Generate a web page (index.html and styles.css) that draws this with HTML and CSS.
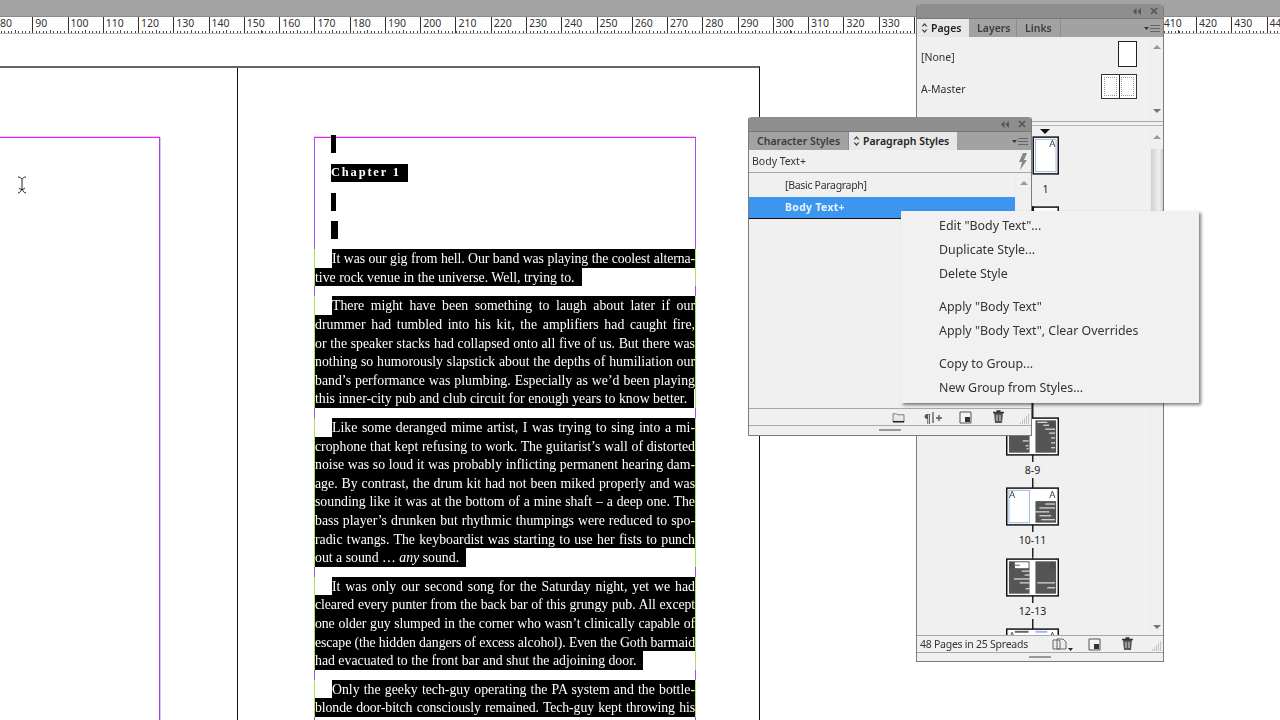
FILE: index.html
```html
<!DOCTYPE html>
<html lang="en">
<head>
    <meta charset="UTF-8">
    <title>Paragraph Styles</title>
    <link rel="stylesheet" href="styles.css">
</head>
<body>
    <svg class="defs" width="0" height="0">
        <symbol id="i-collapse" viewBox="0 0 10 8"><path d="M5 0 1 4l4 4zM10 0 6 4l4 4z" fill="#555"/></symbol>
        <symbol id="i-close" viewBox="0 0 8 8"><path d="M1 1l6 6M7 1 1 7" stroke="#555" stroke-width="1.600"/></symbol>
        <symbol id="i-menu" viewBox="0 0 16 8"><path d="M0 2h5L2.500 5z" fill="#333"/><path d="M6 .5h10M6 3.500h10M6 6.500h10" stroke="#666"/></symbol>
        <symbol id="i-folder" viewBox="0 0 14 12"><path d="M1 2h4l1 1h7v8H1z" fill="#e8e8e8" stroke="#777"/><path d="M1 10.500h12" stroke="#222" stroke-width="1.500"/></symbol>
        <symbol id="i-page" viewBox="0 0 13 13"><path d="M1 1h11v11H1z" fill="#f4f4f4" stroke="#555"/><path d="M6 6h5v5H6z" fill="#333"/></symbol>
        <symbol id="i-trash" viewBox="0 0 13 14"><path d="M2 3h9l-1 10H3z" fill="#555"/><path d="M1 2.500h11M4.500 1h4" stroke="#333" stroke-width="1.500"/><path d="M5 5v6M8 5v6" stroke="#ddd"/></symbol>
        <symbol id="i-grip" viewBox="0 0 10 10"><path d="M8 1h1M6 3h1M8 3h1M4 5h1M6 5h1M8 5h1M2 7h1M4 7h1M6 7h1M8 7h1M0 9h1M2 9h1M4 9h1M6 9h1M8 9h1" stroke="#999"/></symbol>
        <symbol id="i-bolt" viewBox="0 0 10 17"><path d="M5 0 1 9h3l-2 8 7-10H6l3-7z" fill="#888"/></symbol>
        <symbol id="i-sort" viewBox="0 0 7 10"><path d="M3.500 0 6.500 3.500h-1.500L3.500 2 2 3.500H.5zM3.500 10 .5 6.500H2L3.500 8 5 6.500h1.500z" fill="#444"/></symbol>
        <symbol id="i-up" viewBox="0 0 8 4"><path d="M4 0l4 4H0z" fill="#999"/></symbol>
        <symbol id="i-down" viewBox="0 0 8 4"><path d="M0 0h8L4 4z" fill="#777"/></symbol>
    </svg>

    <div class="top-bar"></div>

    <!-- Ruler -->
    <div class="ruler">
        <span>80</span><span>90</span><span>100</span><span>110</span><span>120</span><span>130</span><span>140</span><span>150</span><span>160</span><span>170</span><span>180</span><span>190</span><span>200</span><span>210</span><span>220</span><span>230</span><span>240</span><span>250</span><span>260</span><span>270</span><span>280</span><span>290</span><span>300</span><span>310</span><span>320</span><span>330</span><span>340</span><span>350</span><span>360</span><span>370</span><span>380</span><span>390</span><span>400</span><span>410</span><span>420</span><span>430</span><span>440</span>
    </div>

    <!-- Document canvas -->
    <div class="canvas">
        <div class="sheet"></div>
        <div class="left-frame"></div>

        <svg class="cursor" width="12" height="18" viewBox="0 0 12 18">
            <path d="M2 1c2 0 3 1 4 2 1-1 2-2 4-2M6 3v10M2 17c2 0 3-2 4-4 1 2 2 4 4 4M3 12l3 2 3-2" fill="none" stroke="#222"/>
        </svg>

        <div class="text-frame">
            <div class="caret top"></div>
            <div class="chapter">Chapter 1</div>
            <div class="caret"></div>
            <div class="caret wide"></div>

            <div class="para">
                <div class="ln first tight">It was our gig from hell. Our band was playing the coolest alterna-</div>
                <div class="ln last">tive rock venue in the universe. Well, trying to.</div>
            </div>
            <div class="para">
                <div class="ln first">There might have been something to laugh about later if our</div>
                <div class="ln">drummer had tumbled into his kit, the amplifiers had caught fire,</div>
                <div class="ln">or the speaker stacks had collapsed onto all five of us. But there was</div>
                <div class="ln">nothing so humorously slapstick about the depths of humiliation our</div>
                <div class="ln">band’s performance was plumbing. Especially as we’d been playing</div>
                <div class="ln last">this inner-city pub and club circuit for enough years to know better.</div>
            </div>
            <div class="para">
                <div class="ln first">Like some deranged mime artist, I was trying to sing into a mi-</div>
                <div class="ln">crophone that kept refusing to work. The guitarist’s wall of distorted</div>
                <div class="ln">noise was so loud it was probably inflicting permanent hearing dam-</div>
                <div class="ln">age. By contrast, the drum kit had not been miked properly and was</div>
                <div class="ln">sounding like it was at the bottom of a mine shaft – a deep one. The</div>
                <div class="ln">bass player’s drunken but rhythmic thumpings were reduced to spo-</div>
                <div class="ln">radic twangs. The keyboardist was starting to use her fists to punch</div>
                <div class="ln last">out a sound … <i>any</i> sound.</div>
            </div>
            <div class="para">
                <div class="ln first">It was only our second song for the Saturday night, yet we had</div>
                <div class="ln tight">cleared every punter from the back bar of this grungy pub. All except</div>
                <div class="ln tight">one older guy slumped in the corner who wasn’t clinically capable of</div>
                <div class="ln tight">escape (the hidden dangers of excess alcohol). Even the Goth barmaid</div>
                <div class="ln last">had evacuated to the front bar and shut the adjoining door.</div>
            </div>
            <div class="para">
                <div class="ln first">Only the geeky tech-guy operating the PA system and the bottle-</div>
                <div class="ln tight">blonde door-bitch consciously remained. Tech-guy kept throwing his</div>
            </div>
        </div>
    </div>

    <!-- Pages panel -->
    <div class="panel pages-panel">
        <div class="panel-head">
            <svg class="ico" width="9" height="7"><use href="#i-collapse"/></svg>
            <svg class="ico" width="8" height="8"><use href="#i-close"/></svg>
        </div>
        <div class="tabs">
            <div class="tab active pages-tab"><svg width="7" height="10"><use href="#i-sort"/></svg>Pages</div>
            <div class="tab layers-tab">Layers</div>
            <div class="tab links-tab">Links</div>
            <svg class="tab-menu" width="16" height="8"><use href="#i-menu"/></svg>
        </div>
        <div class="masters">
            <div class="master-list">
                <div class="master">
                    <span>[None]</span>
                    <div class="m-thumb"></div>
                </div>
                <div class="master">
                    <span>A-Master</span>
                    <div class="m-spread"><div class="m-page"></div><div class="m-page"></div></div>
                </div>
            </div>
            <div class="scroll">
                <svg width="8" height="4"><use href="#i-up"/></svg>
                <svg width="8" height="4"><use href="#i-down"/></svg>
            </div>
        </div>
        <div class="page-area">
            <div class="page-list">
                <div class="marker"></div>
                <div class="row single">
                    <svg class="thumb" width="53" height="39" viewBox="0 0 54 39">
                        <rect x="27.750" y=".75" width="25.500" height="37.500" fill="#fff" stroke="#111" stroke-width="1.500"/>
                        <rect x="30" y="3" width="21" height="33" fill="none" stroke="#9db8e8"/>
                        <text x="44" y="11" class="a">A</text>
                    </svg>
                    <div class="label">1</div>
                </div>
                <div class="row"><svg class="thumb" width="53" height="39" viewBox="0 0 54 39"><rect x="27.750" y=".75" width="25.500" height="37.500" fill="#fff" stroke="#111" stroke-width="1.500"/></svg></div>
                <div class="row"><svg class="thumb" width="53" height="39"></svg></div>
                <div class="row"><svg class="thumb" width="53" height="39"></svg></div>
                <div class="row">
                    <svg class="thumb" width="53" height="39" viewBox="0 0 54 39">
                        <rect x=".75" y=".75" width="52.500" height="37.500" fill="#fff" stroke="#111" stroke-width="1.500"/>
                        <rect x="3" y="3" width="21" height="33" fill="#555"/>
                        <path d="M17 24h6M20 29h3M21 32h2" stroke="#fff"/>
                        <rect x="30" y="3" width="21" height="33" fill="#555"/>
                        <path d="M32 5h10M38 8h6M40 12h10M44 16h6M46 21h4M46 26h4M46 31h4" stroke="#fff"/>
                        <text x="44" y="11" class="a">A</text>
                    </svg>
                    <div class="label">8-9</div>
                </div>
                <div class="row">
                    <svg class="thumb" width="53" height="39" viewBox="0 0 54 39">
                        <rect x=".75" y=".75" width="52.500" height="37.500" fill="#fff" stroke="#111" stroke-width="1.500"/>
                        <rect x="3" y="3" width="21" height="33" fill="#fff" stroke="#9db8e8"/>
                        <rect x="30" y="14" width="21" height="22" fill="#555"/>
                        <path d="M32 8h3M40 17h10M34 21h16M30 25h14M34 29h12M36 33h14" stroke="#fff"/>
                        <text x="3" y="11" class="a">A</text>
                        <text x="44" y="11" class="a">A</text>
                    </svg>
                    <div class="label">10-11</div>
                </div>
                <div class="row">
                    <svg class="thumb" width="53" height="39" viewBox="0 0 54 39">
                        <rect x=".75" y=".75" width="52.500" height="37.500" fill="#fff" stroke="#111" stroke-width="1.500"/>
                        <rect x="3" y="3" width="21" height="33" fill="#555"/>
                        <rect x="9" y="4" width="14" height="6" fill="#fff"/>
                        <path d="M16 13h8M19 17h5M8 21h16M14 25h10M20 31h4" stroke="#fff"/>
                        <path d="M9 7h5" stroke="#555"/>
                        <rect x="30" y="3" width="21" height="33" fill="#555"/>
                        <path d="M32 25h18M42 30h8" stroke="#fff"/>
                        <text x="3" y="11" class="a">A</text>
                        <text x="44" y="11" class="a">A</text>
                    </svg>
                    <div class="label">12-13</div>
                </div>
                <div class="row">
                    <svg class="thumb" width="53" height="39" viewBox="0 0 54 39">
                        <rect x=".75" y=".75" width="52.500" height="37.500" fill="#fff" stroke="#111" stroke-width="1.500"/>
                        <path d="M9 3.500h14" stroke="#666" stroke-width="2"/>
                        <path d="M30 3.500h12" stroke="#9db8e8" stroke-width="2"/>
                        <text x="3" y="11" class="a">A</text>
                        <text x="44" y="11" class="a">A</text>
                    </svg>
                </div>
            </div>
            <div class="scroll tall">
                <svg width="8" height="4"><use href="#i-up"/></svg>
                <div class="scroll-thumb"></div>
                <svg class="bottom-arrow" width="8" height="4"><use href="#i-down"/></svg>
            </div>
        </div>
        <div class="panel-foot pages-foot">
            <span class="foot-text">48 Pages in 25 Spreads</span>
            <svg class="new-master" width="22" height="13" viewBox="0 0 22 13"><path d="M1 2h6l1 1v8H1zM5 1h6l3 3v7H5z" fill="#eee" stroke="#666"/><path d="M16 10h5l-2.500 3z" fill="#222"/></svg>
            <svg class="foot-ico" width="13" height="13"><use href="#i-page"/></svg>
            <svg class="foot-ico" width="13" height="14"><use href="#i-trash"/></svg>
            <svg class="foot-grip" width="10" height="10"><use href="#i-grip"/></svg>
        </div>
        <div class="panel-grip"></div>
    </div>

    <!-- Paragraph styles panel -->
    <div class="panel styles-panel">
        <div class="panel-head">
            <svg class="ico" width="9" height="7"><use href="#i-collapse"/></svg>
            <svg class="ico" width="8" height="8"><use href="#i-close"/></svg>
        </div>
        <div class="tabs">
            <div class="tab char-tab">Character Styles</div>
            <div class="tab active para-tab"><svg width="7" height="10"><use href="#i-sort"/></svg>Paragraph Styles</div>
            <svg class="tab-menu" width="16" height="8"><use href="#i-menu"/></svg>
        </div>
        <div class="current-style">
            <span>Body Text+</span>
            <svg width="10" height="17"><use href="#i-bolt"/></svg>
        </div>
        <div class="style-area">
            <div class="style-list">
                <div class="style-row">[Basic Paragraph]</div>
                <div class="style-row selected">Body Text+</div>
            </div>
            <div class="scroll">
                <svg width="8" height="4"><use href="#i-up"/></svg>
            </div>
        </div>
        <div class="panel-foot styles-foot">
            <svg class="foot-ico" width="13" height="11"><use href="#i-folder"/></svg>
            <svg class="foot-ico" width="19" height="13" viewBox="0 0 19 13"><text x="0" y="11" class="pilcrow">¶</text><path d="M9 1v11M12 7h6M15 4v6" stroke="#555" stroke-width="1.300"/></svg>
            <svg class="foot-ico page-btn" width="13" height="13"><use href="#i-page"/></svg>
            <svg class="foot-ico" width="13" height="14"><use href="#i-trash"/></svg>
            <svg class="foot-grip" width="10" height="10"><use href="#i-grip"/></svg>
        </div>
        <div class="panel-grip"></div>
    </div>

    <!-- Context menu -->
    <div class="menu">
        <div class="menu-item">Edit "Body Text"...</div>
        <div class="menu-item">Duplicate Style...</div>
        <div class="menu-item">Delete Style</div>
        <div class="menu-sep"></div>
        <div class="menu-item">Apply "Body Text"</div>
        <div class="menu-item">Apply "Body Text", Clear Overrides</div>
        <div class="menu-sep"></div>
        <div class="menu-item">Copy to Group...</div>
        <div class="menu-item">New Group from Styles...</div>
    </div>
</body>
</html>
```

FILE: styles.css
```css
* {
    margin: 0;
    padding: 0;
    box-sizing: border-box;
}

body {
    width: 1280px;
    height: 720px;
    overflow: hidden;
    position: relative;
    background: #fff;
    font-family: "Noto Sans", sans-serif;
    color: #222;
    filter: blur(0.35px);
}

.defs {
    position: absolute;
}

.top-bar {
    height: 16px;
    background: #a3a3a3;
}

/* Ruler */
.ruler {
    height: 18px;
    display: flex;
    margin-left: -3px;
    border-top: 1px solid #8a8a8a;
    border-bottom: 1px solid #bbb;
    background-color: #fff;
    background-image: repeating-linear-gradient(to right, #444 0, #444 1px, transparent 1px, transparent 3.527px);
    background-size: 100% 2px;
    background-position: 0 14px;
    background-repeat: no-repeat;
    overflow: hidden;
}

.ruler span {
    flex: 0 0 35.27px;
    border-left: 1px solid #333;
    padding-left: 2px;
    font-size: 10.500px;
    line-height: 13px;
    color: #333;
    background: linear-gradient(#444, #444) 50% 13px / 1px 3px no-repeat;
}

/* Document */
.canvas {
    position: relative;
    height: 686px;
    overflow: hidden;
}

.sheet {
    position: absolute;
    left: -2px;
    top: 32px;
    width: 762px;
    height: 700px;
    border-top: 2px solid #666;
    border-right: 1.500px solid #111;
}

.sheet::after {
    content: "";
    position: absolute;
    left: 238.500px;
    top: 0;
    bottom: 0;
    width: 1.500px;
    background: #111;
}

.left-frame {
    position: absolute;
    left: -2px;
    top: 103px;
    width: 162px;
    height: 640px;
    border-top: 1px solid #ee22ee;
    border-right: 1px solid #a040f0;
    box-shadow: 0 -1px 0 #f6c8f6, 1px 0 0 #dcc4f8;
}

.cursor {
    position: absolute;
    left: 16px;
    top: 142px;
}

.text-frame {
    position: absolute;
    left: 314px;
    top: 103px;
    width: 382px;
    height: 640px;
    border: 1px solid #a050f0;
    border-top-color: #ee22ee;
    border-bottom: 0;
    box-shadow: 0 -1px 0 #f6c8f6;
    font-family: "Liberation Serif", serif;
    font-size: 13.800px;
    line-height: 19.600px;
    color: #fff;
}

.caret {
    width: 4.500px;
    height: 18px;
    margin-left: 16px;
    margin-bottom: 10.500px;
    background: #000;
}

.caret.top {
    margin-top: -3px;
    margin-bottom: 11px;
}

.caret.wide {
    width: 7px;
    margin-bottom: 10.300px;
}

.chapter {
    width: 77px;
    height: 18px;
    margin: 0 0 10.500px 16px;
    background: #000;
    font-weight: bold;
    font-size: 12.500px;
    letter-spacing: 1.800px;
    line-height: 16px;
    white-space: nowrap;
}

.para {
    margin-bottom: 10px;
    box-shadow: -1px 0 0 #a9e45c, 1px 0 0 #a9e45c;
}

.ln {
    height: 18.600px;
    background: #000;
    text-align: justify;
    text-align-last: justify;
    overflow: hidden;
}

.ln.first {
    margin-left: 17px;
}

.ln.tight {
    word-spacing: -1.200px;
    letter-spacing: -0.100px;
}

.ln.last {
    width: fit-content;
    padding-right: 7px;
    text-align-last: left;
}

/* Panels */
.panel {
    position: absolute;
    display: flex;
    flex-direction: column;
    background: #f0f0f0;
    border: 1px solid #7c7c7c;
    border-top: 0;
    border-radius: 3px 3px 0 0;
    font-size: 10.500px;
}

.pages-panel {
    left: 916px;
    top: 4px;
    width: 248px;
    height: 658px;
}

.styles-panel {
    left: 748px;
    top: 117px;
    width: 284px;
    height: 319px;
}

.panel-head {
    height: 14px;
    flex: none;
    display: flex;
    justify-content: flex-end;
    align-items: center;
    gap: 9px;
    padding-right: 5px;
    background: #8e8e8e;
    border-radius: 3px 3px 0 0;
}

.tabs {
    height: 19px;
    flex: none;
    position: relative;
    display: flex;
    background: #a2a2a2;
    border-top: 1px solid #777;
}

.tab {
    display: flex;
    align-items: center;
    gap: 3px;
    font-weight: 600;
    color: #3c3c3c;
    border-right: 1px solid #8c8c8c;
    padding-left: 8px;
}

.tab.active {
    background: #e8e8e8;
    color: #222;
    border-right: 0;
    padding-left: 4px;
}

.pages-tab { width: 52px; }
.layers-tab { width: 48px; }
.links-tab { width: 44px; }
.char-tab { width: 100px; }
.para-tab { width: 108px; }

.tab-menu {
    position: absolute;
    right: 3px;
    top: 6px;
}

.masters {
    height: 85px;
    flex: none;
    display: flex;
    border-bottom: 1px solid #aaa;
}

.master-list {
    flex: 1;
    padding: 4px 13px 0 4px;
    display: flex;
    flex-direction: column;
    gap: 6px;
}

.master {
    height: 26px;
    display: flex;
    justify-content: space-between;
    align-items: center;
    color: #333;
}

.master span {
    margin-top: 6px;
}

.m-thumb {
    width: 19px;
    height: 26px;
    background: #fff;
    border: 1.500px solid #222;
}

.m-spread {
    display: flex;
    border: 1.500px solid #333;
}

.m-page {
    width: 17px;
    height: 23px;
    background: #fff;
    outline: 1px dotted #999;
    outline-offset: -3px;
}

.m-page + .m-page {
    border-left: 1.500px solid #222;
}

.scroll {
    width: 13px;
    flex: none;
    display: flex;
    flex-direction: column;
    justify-content: space-between;
    align-items: center;
    padding: 8px 0;
    border-left: 1px solid #ececec;
}

.style-area .scroll {
    width: 16px;
}

.page-area {
    flex: none;
    height: 510px;
    display: flex;
    overflow: hidden;
    border-top: 1px solid #b5b5b5;
    margin-top: 3px;
}

.page-list {
    flex: 1;
    position: relative;
    padding: 10px 2px 0 0;
    display: flex;
    flex-direction: column;
    align-items: center;
    overflow: hidden;
}

.marker {
    position: absolute;
    left: 123px;
    top: 3px;
    width: 0;
    height: 0;
    border: 5px solid transparent;
    border-top-color: #111;
    border-bottom: 0;
}

.row {
    flex: 0 0 70.300px;
    width: 53px;
    display: flex;
    flex-direction: column;
    align-items: center;
    background: linear-gradient(#222, #222) center / 1.500px 100% no-repeat;
}

.row.single {
    background: none;
}

.row.single .label {
    margin-left: 26px;
}

.thumb {
    display: block;
    flex: none;
}

.a {
    font-family: "Noto Sans", sans-serif;
    font-size: 10px;
    fill: #444;
}

.label {
    margin-top: 6px;
    padding: 0 1px;
    line-height: 16px;
    font-size: 10.500px;
    color: #222;
    background: #f0f0f0;
}

.scroll.tall {
    justify-content: flex-start;
    gap: 10px;
    padding: 9px 0 6px;
}

.scroll-thumb {
    width: 13px;
    height: 62px;
    background: linear-gradient(to right, #d0d0d0, #f0f0f0 60%, #c8c8c8);
}

.bottom-arrow {
    margin-top: auto;
}

.panel-foot {
    height: 17px;
    flex: none;
    display: flex;
    align-items: center;
    border-top: 1px solid #a8a8a8;
    position: relative;
}

.foot-text {
    padding-left: 3px;
    color: #333;
    flex: 1;
    letter-spacing: -0.250px;
}

.new-master { margin-right: 14px; }

.pages-foot .foot-ico { margin-right: 20px; }
.pages-foot { padding-right: 9px; }

.styles-foot {
    justify-content: flex-end;
    gap: 19px;
    padding-right: 26px;
}

.page-btn {
    margin: 0 1px 0 -3px;
}

.foot-grip {
    position: absolute;
    right: 1px;
    bottom: 1px;
}

.pilcrow {
    font-family: "Liberation Serif", serif;
    font-size: 13px;
    font-weight: bold;
    fill: #555;
}

.panel-grip {
    flex: none;
    height: 8px;
    border-top: 1px solid #a8a8a8;
    background: linear-gradient(#999, #999) center / 22px 2px no-repeat;
}

.current-style {
    height: 23px;
    flex: none;
    display: flex;
    justify-content: space-between;
    align-items: center;
    padding: 0 3px;
    border-bottom: 1px solid #a8a8a8;
    color: #333;
}

.style-area {
    height: 235px;
    flex: none;
    display: flex;
}

.style-list {
    flex: 1;
}

.style-row {
    height: 24px;
    padding-left: 36px;
    line-height: 25px;
    color: #333;
    letter-spacing: -0.300px;
}

.style-row.selected {
    height: 22px;
    line-height: 21px;
    background: #3c96f0;
    color: #eaf4ff;
    font-weight: 700;
    letter-spacing: 0.300px;
    border-bottom: 1px solid #111;
}

/* Context menu */
.menu {
    position: absolute;
    left: 901px;
    top: 211px;
    width: 298px;
    height: 192px;
    padding: 3px 0 0 38px;
    background: #f1f1f1;
    box-shadow: 2px 2px 3px rgba(0, 0, 0, 0.5);
    font-size: 12.400px;
    color: #333;
}

.menu-item {
    height: 24px;
    line-height: 24px;
}

.menu-sep {
    height: 9px;
}
```
